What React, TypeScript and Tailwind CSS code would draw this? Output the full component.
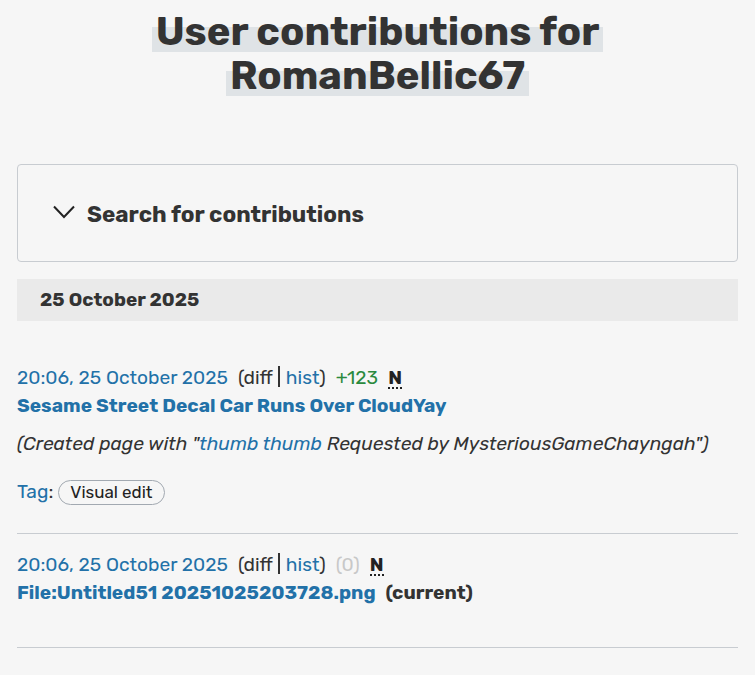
type Contribution = {
  time: string
  title: string
  bytes: string
  bytesTone: "added" | "neutral"
  comment?: boolean
  current?: boolean
  tag?: string
}

const rows: Contribution[] = [
  {
    time: "20:06, 25 October 2025",
    title: "Sesame Street Decal Car Runs Over CloudYay",
    bytes: "+123",
    bytesTone: "added",
    comment: true,
    tag: "Visual edit",
  },
  {
    time: "20:06, 25 October 2025",
    title: "File:Untitled51 20251025203728.png",
    bytes: "(0)",
    bytesTone: "neutral",
    current: true,
  },
]

function Row({ item }: { item: Contribution }) {
  return (
    <li className={item.tag ? "border-b border-[#c8ccd1] pt-[17px] pb-[27px]" : "border-b border-[#c8ccd1] pt-[16px] pb-[40px]"}>
      <div className="flex items-baseline text-[19.2px] leading-[28px]">
        <a className="text-[#2271a8]">{item.time}</a>
        <span className="ml-[10px] text-[#333]">
          (diff
          <span className="ml-[5px] mr-[6px] inline-block h-[21px] w-[2px] translate-y-[3px] bg-[#333]" />
          <a className="text-[#2271a8]">hist</a>)
        </span>
        <span
          className={
            item.bytesTone === "added"
              ? "ml-[10px] text-[#2b8a3e]"
              : "ml-[10px] text-[#c8c8c8]"
          }
        >
          {item.bytes}
        </span>
        <abbr
          title="This edit created a new page"
          className="ml-[10px] font-bold text-[#222] no-underline [border-bottom:2px_dotted_#222] leading-[19px]"
        >
          N
        </abbr>
      </div>
      <div className="flex items-baseline text-[19.2px] leading-[28px]">
        <a className="font-bold text-[#2271a8]">{item.title}</a>
        {item.current && <span className="ml-[10px] font-bold text-[#333]">(current)</span>}
      </div>
      {item.comment && (
        <p className="mt-[10px] text-[19.2px] italic leading-[28px] text-[#333]">
          (Created page with "<a className="text-[#2271a8]">thumb thumb</a> Requested by
          MysteriousGameChayngah")
        </p>
      )}
      {item.tag && (
        <div className="mt-[20px] flex items-center text-[19.2px] leading-[28px]">
          <a className="text-[#2271a8]">Tag</a>
          <span className="text-[#333]">:</span>
          <span className="ml-[5px] rounded-full border border-[#a2a9b1] px-[11px] text-[17px] leading-[23px] text-[#222]">
            {item.tag}
          </span>
        </div>
      )}
    </li>
  )
}

export default function App() {
  return (
    <div className="min-h-[675px] bg-[#f6f6f6] px-[17px] font-['Rubik','Roboto',sans-serif] text-[#333]">
      <h1 className="pt-[10px] text-center text-[40px] font-bold leading-[44px] text-[#333]">
        <span className="box-decoration-clone bg-[linear-gradient(transparent_40%,#dfe3e6_40%,#dfe3e6_94%,transparent_94%)] px-[4px]">
          User contributions for RomanBellic67
        </span>
      </h1>

      <div className="mt-[66px] rounded-[4px] border border-[#c8ccd1]">
        <button className="flex h-[96px] w-full items-center gap-[12px] pl-[35px] text-left">
          <svg width="22" height="14" viewBox="0 0 22 14" fill="none" className="mt-[-3px]">
            <path d="M1 1.5 L11 12 L21 1.5" stroke="#222" strokeWidth="2" />
          </svg>
          <span className="mt-[3px] text-[22.5px] font-bold text-[#333]">Search for contributions</span>
        </button>
      </div>

      <h4 className="mt-[17px] bg-[#eaeaea] px-[23px] py-[9px] text-[19px] font-bold leading-[24px] text-[#333]">
        25 October 2025
      </h4>

      <ul className="mt-[25px]">
        {rows.map((r, i) => (
          <Row key={i} item={r} />
        ))}
      </ul>
    </div>
  )
}
